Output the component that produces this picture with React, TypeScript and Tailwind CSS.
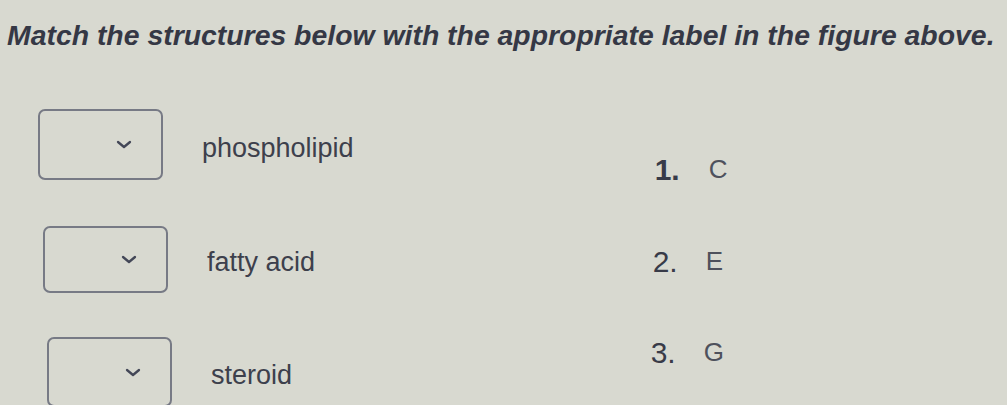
import React from "react";

const Chevron = () => (
  <svg width="16" height="9" viewBox="0 0 16 9" fill="none">
    <path d="M2 2 L8 7 L14 2" stroke="#434757" strokeWidth="2.3" strokeLinecap="round" strokeLinejoin="round" />
  </svg>
);

const Row = ({ label, ml, h, mt, lt }: { label: string; ml: string; h: string; mt: string; lt: string }) => (
  <div className={`flex items-center ${ml} ${mt}`}>
    <div className={`w-[125px] ${h} rounded-[7px] border-2 border-[#777a85] flex items-center justify-end pr-[29px]`}>
      <Chevron />
    </div>
    <span className={`ml-[39px] text-[27px] text-[#3d404c] ${lt}`}>{label}</span>
  </div>
);

export default function App() {
  return (
    <div
      className="w-[1007px] h-[405px] overflow-hidden bg-[#d8d9d0] text-[#363944]"
      style={{ fontFamily: '"Liberation Sans", Arial, sans-serif' }}
    >
      <h1 className="pl-[7px] pt-[18px] text-[28.4px] font-bold italic leading-[34px] text-[#353845]">
        Match the structures below with the appropriate label in the figure above.
      </h1>
      <div className="flex">
        <div className="flex flex-col">
          <Row label="phospholipid" ml="ml-[38px]" h="h-[71px]" mt="mt-[57px]" lt="mt-[8px]" />
          <Row label="fatty acid" ml="ml-[43px]" h="h-[67px]" mt="mt-[46px]" lt="mt-[5px]" />
          <Row label="steroid" ml="ml-[47px]" h="h-[70px]" mt="mt-[44px]" lt="mt-[7px]" />
        </div>
        <div className="flex flex-col ml-[297px] mt-[97px] text-[30px] text-[#383b48]">
          <div className="flex items-center h-[40px]">
            <span className="w-[54px] font-semibold ml-[4px]">1.</span>
            <span className="text-[26px] text-[#4e515c]">C</span>
          </div>
          <div className="flex items-center h-[40px] mt-[52px]">
            <span className="w-[53px] ml-[2px]">2.</span>
            <span className="text-[26px] text-[#4e515c]">E</span>
          </div>
          <div className="flex items-center h-[40px] mt-[51px]">
            <span className="w-[53px] ml-[0px]">3.</span>
            <span className="text-[26px] text-[#4e515c]">G</span>
          </div>
        </div>
      </div>
    </div>
  );
}
